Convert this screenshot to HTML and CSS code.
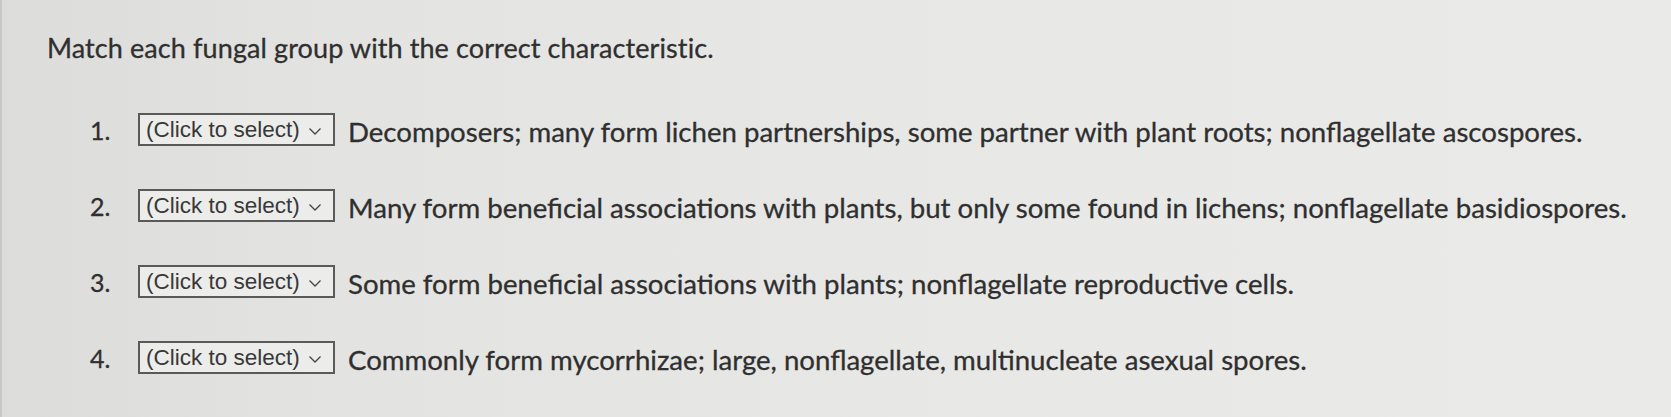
FILE: index.html
```html
<!DOCTYPE html>
<html>
<head>
<meta charset="utf-8">
<link rel="stylesheet" href="styles.css">
</head>
<body>
<div class="page">
  <p class="prompt">Match each fungal group with the correct characteristic.</p>
  <ol class="items">
    <li class="item">
      <span class="num">1.</span>
      <span class="select"><span class="sel-text">(Click to select)</span><svg class="chev" viewBox="0 0 14 9" width="14" height="9"><path d="M1.5 1.5 L7 7 L12.5 1.5" fill="none" stroke="#444" stroke-width="1.3"/></svg></span>
      <span class="desc">Decomposers; many form lichen partnerships, some partner with plant roots; nonflagellate ascospores.</span>
    </li>
    <li class="item">
      <span class="num">2.</span>
      <span class="select"><span class="sel-text">(Click to select)</span><svg class="chev" viewBox="0 0 14 9" width="14" height="9"><path d="M1.5 1.5 L7 7 L12.5 1.5" fill="none" stroke="#444" stroke-width="1.3"/></svg></span>
      <span class="desc">Many form beneficial associations with plants, but only some found in lichens; nonflagellate basidiospores.</span>
    </li>
    <li class="item">
      <span class="num">3.</span>
      <span class="select"><span class="sel-text">(Click to select)</span><svg class="chev" viewBox="0 0 14 9" width="14" height="9"><path d="M1.5 1.5 L7 7 L12.5 1.5" fill="none" stroke="#444" stroke-width="1.3"/></svg></span>
      <span class="desc">Some form beneficial associations with plants; nonflagellate reproductive cells.</span>
    </li>
    <li class="item">
      <span class="num">4.</span>
      <span class="select"><span class="sel-text">(Click to select)</span><svg class="chev" viewBox="0 0 14 9" width="14" height="9"><path d="M1.5 1.5 L7 7 L12.5 1.5" fill="none" stroke="#444" stroke-width="1.3"/></svg></span>
      <span class="desc">Commonly form mycorrhizae; large, nonflagellate, multinucleate asexual spores.</span>
    </li>
  </ol>
</div>
</body>
</html>
```
FILE: styles.css
```css
html, body {
  margin: 0;
  padding: 0;
  height: 100%;
}
body {
  background: linear-gradient(90deg, #dcdcdb 0%, #e3e3e1 20%, #e8e8e6 60%, #eaeae8 100%);
  font-family: Lato, "Noto Sans", sans-serif;
  color: #2f2f2f;
  overflow: hidden;
}
.page {
  height: 417px;
  box-sizing: border-box;
  padding: 30px 0 0 45px;
  border-left: 2px solid #c8c8c8;
}
.prompt {
  margin: 0;
  font-size: 27px;
  line-height: 36px;
  letter-spacing: 0.1px;
  -webkit-text-stroke: 0.3px #2f2f2f;
}
.items {
  list-style: none;
  margin: 0;
  padding: 0;
  margin-top: 47px;
  display: flex;
  flex-direction: column;
  gap: 43px;
}
.item {
  display: flex;
  align-items: center;
  height: 33px;
}
.num {
  width: 48px;
  padding-left: 43px;
  font-size: 25px;
  -webkit-text-stroke: 0.3px #2f2f2f;
}
.select {
  display: flex;
  align-items: center;
  box-sizing: border-box;
  width: 197px;
  height: 33px;
  padding: 0 0 0 6px;
  border: 2px solid #5a5a5a;
  background: #ececea;
  font-family: "Liberation Sans", Arial, sans-serif;
  font-size: 22.5px;
  color: #383838;
}
.chev {
  display: block;
  margin-top: 3px;
  margin-left: 8px;
}
.desc {
  margin-left: 13px;
  font-size: 27.6px;
  line-height: 33px;
  padding-top: 4px;
  -webkit-text-stroke: 0.3px #2f2f2f;
}
```
